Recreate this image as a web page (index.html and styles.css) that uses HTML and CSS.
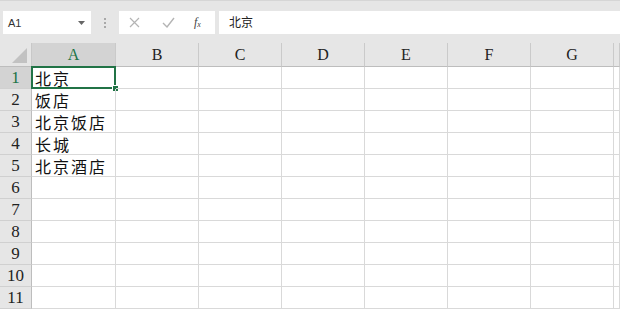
FILE: index.html
```html
<!DOCTYPE html>
<html lang="zh-CN">
<head>
  <meta charset="UTF-8" />
  <title>工作表</title>
  <link rel="stylesheet" href="styles.css">
</head>
<body>

  <div class="toolbar">
    <div class="name-box">
      <span>A1</span>
      <svg class="arrow" width="7" height="4" viewBox="0 0 7 4"><path d="M0 0h7L3.5 4z" fill="#666"/></svg>
    </div>
    <div class="grip">
      <i></i><i></i><i></i>
    </div>
    <div class="fx-buttons">
      <svg width="11" height="11" viewBox="0 0 11 11"><path d="M1 1l9 9M10 1l-9 9" stroke="#b4b4b4" stroke-width="1.2" fill="none"/></svg>
      <svg width="13" height="11" viewBox="0 0 13 11"><path d="M1 6l4 4 7-9" stroke="#b4b4b4" stroke-width="1.4" fill="none"/></svg>
      <span class="fx">f<sub>x</sub></span>
    </div>
    <div class="formula">北京</div>
  </div>

  <div class="sheet" id="sheet">
    <div class="corner"><span class="tri"></span></div>
  </div>

  <script>
    const sheet = document.getElementById("sheet");
    // last column is only a sliver at the right edge, so no letter
    const cols = ["A", "B", "C", "D", "E", "F", "G", ""];
    const data = ["北京", "饭店", "北京饭店", "长城", "北京酒店"];

    // column headers
    cols.forEach(c => {
      const h = document.createElement("div");
      h.className = "col-head" + (c === "A" ? " active" : "");
      h.textContent = c;
      sheet.appendChild(h);
    });

    // rows
    for (let r = 1; r <= 11; r++) {
      const rh = document.createElement("div");
      rh.className = "row-head" + (r === 1 ? " active" : "");
      rh.textContent = r;
      sheet.appendChild(rh);

      cols.forEach((c, i) => {
        const cell = document.createElement("div");
        cell.className = "cell";
        if (i === 0 && data[r - 1]) {
          const txt = document.createElement("span");
          txt.className = "val";
          txt.textContent = data[r - 1];
          cell.appendChild(txt);
        }
        if (i === 0 && r === 1) {
          const sel = document.createElement("span");
          sel.className = "sel-box";
          const handle = document.createElement("span");
          handle.className = "handle";
          sel.appendChild(handle);
          cell.appendChild(sel);
        }
        sheet.appendChild(cell);
      });
    }
  </script>

</body>
</html>
```

FILE: styles.css
```css
body {
  margin: 0;
  width: 620px;
  height: 309px;
  overflow: hidden;
  background: #fff;
  font-family: "Liberation Serif", serif;
}
.toolbar {
  height: 43px;
  box-sizing: border-box;
  background: #e6e6e6;
  border-top: 1px solid #d6d6d6;
  padding: 10px 0 0 3px;
  display: flex;
  align-items: flex-start;
}
.name-box {
  width: 88px;
  height: 23px;
  background: #fff;
  display: flex;
  align-items: center;
  justify-content: space-between;
  padding: 0 6px 0 5px;
  box-sizing: border-box;
  font-family: "Liberation Sans", sans-serif;
  font-size: 11px;
  color: #333;
}
.name-box .arrow {
  margin-top: 1px;
}
.grip {
  width: 28px;
  height: 23px;
  display: flex;
  flex-direction: column;
  align-items: center;
  justify-content: center;
  gap: 2px;
}
.grip i {
  width: 2px;
  height: 2px;
  background: #a8a8a8;
}
.fx-buttons {
  width: 96px;
  height: 23px;
  background: #fff;
  display: flex;
  align-items: center;
  padding: 0 6px 0 10px;
  box-sizing: border-box;
}
.fx-buttons svg:nth-child(2) {
  margin-left: 22px;
}
.fx {
  margin-left: 19px;
  font-family: "Liberation Serif", serif;
  font-style: italic;
  font-size: 12px;
  color: #444;
}
.fx sub {
  font-size: 8px;
  vertical-align: -1px;
}
.formula {
  flex: 1;
  height: 23px;
  margin-left: 4px;
  background: #fff;
  padding-left: 10px;
  line-height: 22px;
  font-family: "Noto Sans CJK SC", sans-serif;
  font-size: 12px;
  color: #222;
}

.sheet {
  display: grid;
  grid-template-columns: 32px 84px 83px 83px 83px 83px 83px 83px 6px;
  grid-template-rows: 24px repeat(11, 22px);
}
.corner {
  background: #e6e6e6;
  border-right: 1px solid #c8c8c8;
  border-bottom: 1px solid #bdbdbd;
  box-sizing: border-box;
  position: relative;
}
.tri {
  position: absolute;
  right: 4px;
  bottom: 3px;
  width: 0;
  height: 0;
  border-left: 15px solid transparent;
  border-bottom: 15px solid #c2c2c2;
}
.col-head {
  background: #e6e6e6;
  border-right: 1px solid #cacaca;
  border-bottom: 1px solid #bdbdbd;
  box-sizing: border-box;
  text-align: center;
  font-size: 16px;
  line-height: 24px;
  color: #222;
}
.row-head {
  background: #e6e6e6;
  border-right: 1px solid #bdbdbd;
  border-bottom: 1px solid #d0d0d0;
  box-sizing: border-box;
  text-align: center;
  font-size: 17px;
  line-height: 22px;
  color: #222;
}
.col-head.active,
.row-head.active {
  background: #d3d3d3;
  color: #217346;
}
.col-head.active {
  border-bottom: 1px solid #217346;
}
.cell {
  border-right: 1px solid #d9d9d9;
  border-bottom: 1px solid #d9d9d9;
  box-sizing: border-box;
  padding-left: 3px;
  display: flex;
  align-items: center;
  white-space: nowrap;
  position: relative;
}
.val {
  font-family: "Noto Sans CJK SC", sans-serif;
  font-size: 16px;
  line-height: 20px;
  letter-spacing: 2px;
  color: #111;
}
.sel-box {
  position: absolute;
  left: -1px;
  top: -1px;
  right: -1px;
  bottom: -1px;
  border: 2px solid #217346;
}
.handle {
  position: absolute;
  right: -5px;
  bottom: -5px;
  width: 5px;
  height: 5px;
  background: #217346;
  border: 1px solid #fff;
}
```
